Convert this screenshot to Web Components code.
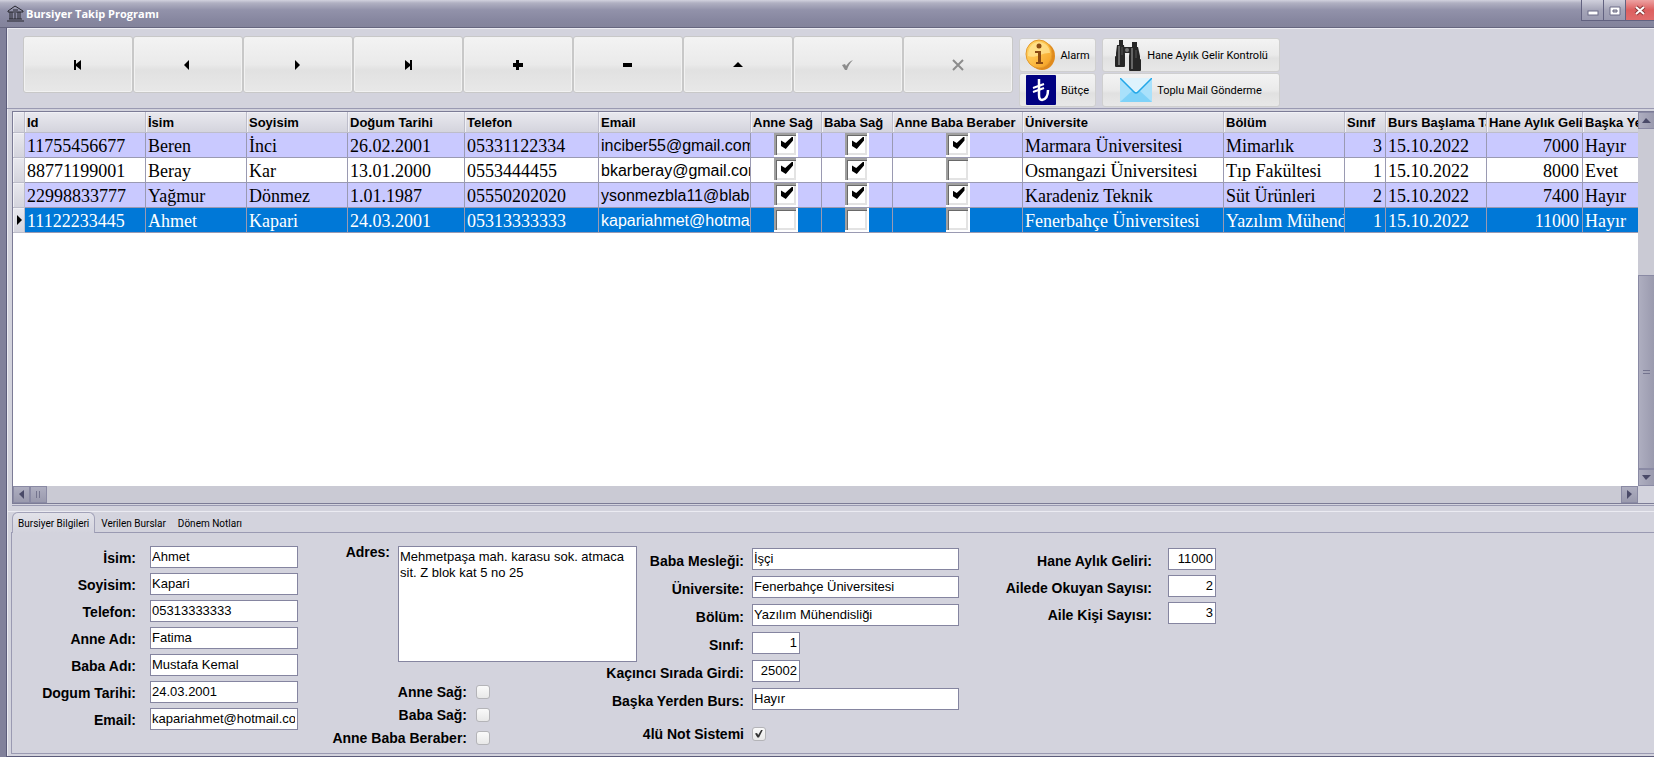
<!DOCTYPE html>
<html lang="tr">
<head>
<meta charset="utf-8">
<title>Bursiyer Takip Programı</title>
<style>
  :root {
    --face: #d3d3dd;
    --line: #9a9ab2;
    --edge: #5c5c7a;
    --light: #ebebf2;
    --stripe: #c9c9ff;
    --select: #0078d7;
    --sans: "Liberation Sans", Arial, sans-serif;
    --narrow: Roboto, "Liberation Sans", sans-serif;
    --serif: "Liberation Serif", "Times New Roman", serif;
  }
  body {
    margin: 0;
    font-family: var(--sans);
    color: #000;
    background: var(--face);
  }
</style>
</head>
<body>
<app-window caption="Bursiyer Takip Programı">
  <tool-bar slot="toolbar">
    <nav-button slot="nav" icon="first" label="İlk kayıt"></nav-button>
    <nav-button slot="nav" icon="prev" label="Önceki kayıt"></nav-button>
    <nav-button slot="nav" icon="next" label="Sonraki kayıt"></nav-button>
    <nav-button slot="nav" icon="last" label="Son kayıt"></nav-button>
    <nav-button slot="nav" icon="plus" label="Ekle"></nav-button>
    <nav-button slot="nav" icon="minus" label="Sil"></nav-button>
    <nav-button slot="nav" icon="up" label="Düzenle"></nav-button>
    <nav-button slot="nav" icon="check" label="Kaydet" disabled></nav-button>
    <nav-button slot="nav" icon="cross" label="İptal" disabled></nav-button>

    <tool-button>
      <svg slot="icon" width="30" height="32" viewBox="0 0 30 32">
        <defs>
          <linearGradient id="gold" x1="0" y1="0" x2="1" y2="1">
            <stop offset="0" stop-color="#ffd76a"/><stop offset=".5" stop-color="#fdc04a"/><stop offset="1" stop-color="#f39a1c"/>
          </linearGradient>
        </defs>
        <ellipse cx="17" cy="17" rx="13" ry="14" fill="#e08a1c"/>
        <ellipse cx="14" cy="15" rx="13" ry="14" fill="url(#gold)" stroke="#e39a2c"/>
        <path d="M3 17C3 8 8 3 14 3s11 5 11 11C18 13 10 20 3 17z" fill="#ffe79a" opacity=".7"/>
        <circle cx="14" cy="7" r="2.5" fill="#8a4a12"/>
        <path d="M10 12h6v11h2v2h-7v-2h2v-9h-3z" fill="#8a4a12"/>
      </svg>
      Alarm
    </tool-button>
    <tool-button>
      <svg slot="icon" width="28" height="32" viewBox="2 0 28 32">
        <g fill="#262626">
          <rect x="7" y="1" width="4" height="6"/><rect x="20" y="3" width="5" height="6"/>
          <path d="M5 6h7l1 9v12H4V14z"/><path d="M18 8h8l2 9v14H17V17z"/>
          <path d="M12 8h6v6h-6z"/><rect x="3" y="17" width="10" height="11" rx="1"/><rect x="17" y="20" width="12" height="12" rx="1"/>
        </g>
        <path d="M7 7v19M20 9v21" stroke="#7c7c7c" stroke-width="1.5"/>
        <path d="M10 8v8M24 11v8" stroke="#555" stroke-width="1"/>
        <circle cx="15" cy="11" r="2" fill="#777"/>
      </svg>
      Hane Aylık Gelir Kontrolü
    </tool-button>
    <tool-button>
      <svg slot="icon" width="30" height="30" viewBox="0 0 30 30">
        <rect width="30" height="30" rx="1" fill="#000080"/>
        <path d="M13 4v16q0 5 3 5 6-1 6-10" fill="none" stroke="#fff" stroke-width="2.5"/>
        <path d="M7 13l11-4M7 17l11-4" stroke="#fff" stroke-width="2"/>
      </svg>
      Bütçe
    </tool-button>
    <tool-button>
      <svg slot="icon" width="32" height="24" viewBox="0 0 32 24">
        <rect width="32" height="24" fill="#a9e1fb"/>
        <path d="M0 24l12-11h8l12 11z" fill="#7fd2f8"/>
        <path d="M0 0h32L16 15z" fill="#def3fd"/>
        <path d="M0 0l14 14q2 2 4 0L32 0" fill="none" stroke="#22a7e8" stroke-width="1.5"/>
      </svg>
      Toplu Mail Gönderme
    </tool-button>
  </tool-bar>

  <record-grid slot="grid"></record-grid>

  <tab-panel slot="details">
    <form-column style="--label: 104px; --gap: 14px; --control: 148px; --row: 5px">
      <form-field label="İsim:" value="Ahmet"></form-field>
      <form-field label="Soyisim:" value="Kapari"></form-field>
      <form-field label="Telefon:" value="05313333333"></form-field>
      <form-field label="Anne Adı:" value="Fatima"></form-field>
      <form-field label="Baba Adı:" value="Mustafa Kemal"></form-field>
      <form-field label="Dogum Tarihi:" value="24.03.2001"></form-field>
      <form-field label="Email:" value="kapariahmet@hotmail.com"></form-field>
    </form-column>

    <form-column style="--label: 70px; --gap: 8px; --control: 239px; --row: 20px">
      <form-field kind="memo" label="Adres:" value="Mehmetpaşa mah. karasu sok. atmaca sit. Z blok kat 5 no 25"></form-field>
      <form-column class="checks" style="--label: 147px; --gap: 9px; --row: 4px">
        <form-field kind="check" label="Anne Sağ:"></form-field>
        <form-field kind="check" label="Baba Sağ:"></form-field>
        <form-field kind="check" label="Anne Baba Beraber:"></form-field>
      </form-column>
    </form-column>

    <form-column class="lower" style="--label: 107px; --gap: 8px; --control: 207px; --row: 6px">
      <form-field label="Baba Mesleği:" value="İşçi"></form-field>
      <form-field label="Üniversite:" value="Fenerbahçe Üniversitesi"></form-field>
      <form-field label="Bölüm:" value="Yazılım Mühendisliği"></form-field>
      <form-field kind="number" label="Sınıf:" value="1"></form-field>
      <form-field kind="number" label="Kaçıncı Sırada Girdi:" value="25002"></form-field>
      <form-field label="Başka Yerden Burs:" value="Hayır"></form-field>
      <form-field class="last" kind="check" label="4lü Not Sistemi" checked></form-field>
    </form-column>

    <form-column class="lower" style="--label: 161px; --gap: 16px; --row: 5px">
      <form-field kind="number" label="Hane Aylık Geliri:" value="11000"></form-field>
      <form-field kind="number" label="Ailede Okuyan Sayısı:" value="2"></form-field>
      <form-field kind="number" label="Aile Kişi Sayısı:" value="3"></form-field>
    </form-column>
  </tab-panel>
</app-window>

<script>
class AppWindow extends HTMLElement {
  constructor() {
    super();
    this.attachShadow({ mode: "open" });
  }

  connectedCallback() {
    this.shadowRoot.innerHTML = `
      <style>
        :host {
          display: flex;
          flex-direction: column;
          min-height: 100vh;
          overflow: hidden;
        }
        header {
          display: flex;
          align-items: flex-start;
          height: 27px;
          padding-left: 7px;
          background: linear-gradient(#d2d2de, #b0b0c2 3px, #9292aa 10px, #8787a0 20px, #83839b);
          border-bottom: 1px solid #66667f;
        }
        header svg { display: block; }
        .logo { margin: 5px 2px 0 0; }
        h1 {
          flex: 1;
          margin: 0;
          color: #fff;
          font: bold 11px/28px "Open Sans", "Noto Sans", sans-serif;
        }
        .controls {
          display: flex;
          border: 1px solid #626280;
          border-width: 0 0 1px 1px;
        }
        .controls button {
          display: grid;
          place-items: center;
          width: 22px;
          height: 20px;
          padding: 0;
          border: 0;
          border-right: 1px solid #626280;
          background: linear-gradient(#d0d0dc, #a5a5b8 50%, #9a9ab0);
        }
        .controls .close {
          width: 28px;
          border-right: 0;
          background: linear-gradient(#eda2a2, #dc5f5f 50%, #e06c6c);
        }
        main {
          flex: 1;
          display: flex;
          flex-direction: column;
          border-left: 1px solid var(--edge);
          border-bottom: 1px solid var(--edge);
          margin-left: 6px;
          box-shadow: -6px 0 0 #81819b, inset 1px 1px 0 var(--light);
        }
        ::slotted([slot="grid"]) { flex: 1; }
      </style>
      <header>
        <svg class="logo" width="17" height="17" viewBox="0 0 17 17" fill="none" stroke="#26262e" aria-hidden="true">
          <path d="M1 6L8 1l8 5v1H1zM3 7v7M5 7v7M8 8v6M11 7v7M13 7v7M2 14h13M0 16h17M6 5h5"/>
        </svg>
        <h1></h1>
        <div class="controls">
          <button aria-label="Küçült"><svg width="12" height="12"><rect x="1" y="7" width="10" height="4" fill="#fff" stroke="#6c6c88"/></svg></button>
          <button aria-label="Ekranı kapla"><svg width="12" height="12"><path d="M1 3h10v8H1z" fill="#fff" stroke="#6c6c88"/><path d="M4 6h4v2H4z" fill="#bbb" stroke="#6c6c88"/></svg></button>
          <button class="close" aria-label="Kapat"><svg width="12" height="12"><path d="M2 3l8 7M10 3l-8 7" stroke="#8c3b3b" stroke-width="4"/><path d="M2 3l8 7M10 3l-8 7" stroke="#fff" stroke-width="2"/></svg></button>
        </div>
      </header>
      <main>
        <slot name="toolbar"></slot>
        <slot name="grid"></slot>
        <slot name="details"></slot>
      </main>
    `;
    this.shadowRoot.querySelector("h1").textContent = this.getAttribute("caption");
  }
}
customElements.define("app-window", AppWindow);

class ToolBar extends HTMLElement {
  constructor() {
    super();
    this.attachShadow({ mode: "open" });
    this.shadowRoot.innerHTML = `
      <style>
        :host {
          display: flex;
          gap: 6px;
          padding: 8px 0 0 16px;
          height: 72px;
          border-bottom: 1px solid var(--line);
        }
        .nav {
          display: flex;
          flex: 0 1 990px;
          height: 57px;
        }
        .tools {
          display: grid;
          grid-template: 34px 34px / 77px 178px;
          gap: 1px 6px;
          padding-top: 2px;
        }
      </style>
      <div class="nav"><slot name="nav"></slot></div>
      <div class="tools"><slot></slot></div>
    `;
  }
}
customElements.define("tool-bar", ToolBar);

const NAV_ICONS = {
  first: '<path d="M4 3h2v4l5-4v10l-5-4v4H4z"/>',
  prev: '<path d="M4 8l5-5v10z"/>',
  next: '<path d="M10 8L5 3v10z"/>',
  last: '<path d="M12 3h-2v4L5 3v10l5-4v4h2z"/>',
  plus: '<path d="M6 3h3v3h4v4H9v3H6v-3H3V6h3z"/>',
  minus: '<path d="M3 6h9v4H3z"/>',
  up: '<path d="M3 10l5-5 5 5z"/>',
  check: '<path d="M2 8l3-1 1 2c2-3 4-5 7-6-3 3-5 6-6 10H5z" fill="#8c8c8c"/>',
  cross: '<path d="M3 3l10 10M13 3L3 13" stroke="#8c8c8c" stroke-width="2"/>',
};

class NavButton extends HTMLElement {
  constructor() {
    super();
    this.attachShadow({ mode: "open" });
  }

  connectedCallback() {
    this.shadowRoot.innerHTML = `
      <style>
        :host { display: flex; flex: 1; }
        button {
          flex: 1;
          display: grid;
          place-items: center;
          padding: 0;
          border: 1px solid #c8c8c8;
          border-radius: 3px;
          background: linear-gradient(#f3f3f3, #eaeaea 50%, #e1e1e1 60%, #e8e8e8);
          box-shadow: inset 0 0 0 1px #f2f2f2;
        }
      </style>
      <button aria-label="${this.getAttribute("label")}" ${this.hasAttribute("disabled") ? "disabled" : ""}>
        <svg width="16" height="16" viewBox="0 0 16 16">${NAV_ICONS[this.getAttribute("icon")]}</svg>
      </button>
    `;
  }
}
customElements.define("nav-button", NavButton);

class ToolButton extends HTMLElement {
  constructor() {
    super();
    this.attachShadow({ mode: "open" });
    this.shadowRoot.innerHTML = `
      <style>
        :host { display: flex; }
        button {
          flex: 1;
          display: flex;
          align-items: center;
          justify-content: center;
          gap: 5px;
          padding: 0;
          border: 1px solid #cfcfcf;
          border-radius: 3px;
          background: linear-gradient(#f3f3f3, #eaeaea 50%, #e1e1e1 60%, #e8e8e8);
          color: #000;
          font: 11px/16px var(--narrow);
          white-space: nowrap;
          overflow: hidden;
        }
        span { padding-top: 2px; }
      </style>
      <button><slot name="icon"></slot><span><slot></slot></span></button>
    `;
  }
}
customElements.define("tool-button", ToolButton);

// orient="vertical" | "horizontal"; before/thumb/after are flex values of the track parts
class ScrollBar extends HTMLElement {
  constructor() {
    super();
    this.attachShadow({ mode: "open" });
  }

  connectedCallback() {
    const vertical = this.getAttribute("orient") === "vertical";
    this.shadowRoot.innerHTML = `
      <style>
        :host {
          display: flex;
          flex-direction: ${vertical ? "column" : "row"};
          background: #cacad4;
          --dir: ${vertical ? "to right" : "to bottom"};
        }
        button, .thumb {
          box-sizing: border-box;
          display: grid;
          place-items: center;
          flex: 0 0 17px;
          padding: 0;
          border: 1px solid #8a8aa4;
          background: linear-gradient(var(--dir), #aeaec0, #9a9aae);
        }
        .thumb { flex: ${this.getAttribute("thumb")}; }
        .before { flex: ${this.getAttribute("before")}; }
        .after { flex: ${this.getAttribute("after")}; }
        svg { display: block; fill: #4a4a68; }
      </style>
      <button aria-label="Geri"><svg width="9" height="9"><path d="${vertical ? "M0 7l4-5 5 5z" : "M2 4l5-4v9z"}"/></svg></button>
      <div class="before"></div>
      <div class="thumb"><svg width="7" height="7"><path fill="#74748e" d="${vertical ? "M0 1h7v1H0zM0 4h7v1H0z" : "M1 0h1v7H1zM4 0h1v7H4z"}"/></svg></div>
      <div class="after"></div>
      <button aria-label="İleri"><svg width="9" height="9"><path d="${vertical ? "M0 2l4 5 5-5z" : "M7 4L2 0v9z"}"/></svg></button>
    `;
  }
}
customElements.define("scroll-bar", ScrollBar);

const COLUMNS = [
  { title: "Id", width: 121 },
  { title: "İsim", width: 101 },
  { title: "Soyisim", width: 101 },
  { title: "Doğum Tarihi", width: 117 },
  { title: "Telefon", width: 134 },
  { title: "Email", width: 152, type: "email" },
  { title: "Anne Sağ", width: 71, type: "bool" },
  { title: "Baba Sağ", width: 71, type: "bool" },
  { title: "Anne Baba Beraber", width: 130, type: "bool" },
  { title: "Üniversite", width: 201 },
  { title: "Bölüm", width: 121 },
  { title: "Sınıf", width: 41, type: "num" },
  { title: "Burs Başlama Tarihi", width: 101 },
  { title: "Hane Aylık Geliri", width: 96, type: "num" },
  { title: "Başka Yerden Burs" },
];

const ROWS = [
  ["11755456677", "Beren", "İnci", "26.02.2001", "05331122334", "inciber55@gmail.com", true, true, true, "Marmara Üniversitesi", "Mimarlık", "3", "15.10.2022", "7000", "Hayır"],
  ["88771199001", "Beray", "Kar", "13.01.2000", "0553444455", "bkarberay@gmail.com", true, true, false, "Osmangazi Üniversitesi", "Tıp Fakültesi", "1", "15.10.2022", "8000", "Evet"],
  ["22998833777", "Yağmur", "Dönmez", "1.01.1987", "05550202020", "ysonmezbla11@blabla.com", true, true, true, "Karadeniz Teknik", "Süt Ürünleri", "2", "15.10.2022", "7400", "Hayır"],
  ["11122233445", "Ahmet", "Kapari", "24.03.2001", "05313333333", "kapariahmet@hotmail.com", false, false, false, "Fenerbahçe Üniversitesi", "Yazılım Mühendisliği", "1", "15.10.2022", "11000", "Hayır"],
];

class RecordGrid extends HTMLElement {
  constructor() {
    super();
    this.attachShadow({ mode: "open" });
  }

  connectedCallback() {
    this.render();
  }

  cell(value, col) {
    if (col.type === "bool") {
      return `<td class="bool"><input type="checkbox" aria-label="${col.title}" ${value ? "checked" : ""}></td>`;
    }
    return `<td class="${col.type || ""}">${value}</td>`;
  }

  render() {
    const selected = ROWS.length - 1;
    const cols = COLUMNS.map((c) => `<col${c.width ? ` style="width:${c.width}px"` : ""}>`).join("");
    const head = COLUMNS.map((c) => `<th scope="col">${c.title}</th>`).join("");
    const body = ROWS.map((row, i) => `
      <tr class="${i === selected ? "selected" : ""}">
        <th scope="row">${i === selected ? '<svg width="5" height="10"><path d="M0 0l5 5-5 5z"/></svg>' : ""}</th>
        ${row.map((v, j) => this.cell(v, COLUMNS[j])).join("")}
      </tr>`).join("");

    this.shadowRoot.innerHTML = `
      <style>
        :host {
          display: flex;
          flex-direction: column;
          margin: 2px 0 0 5px;
          border-top: 1px solid #7c7c96;
          border-bottom: 1px solid var(--line);
          padding-bottom: 1px;
        }
        .body {
          flex: 1;
          display: grid;
          grid-template: 1fr 17px / minmax(0, 1fr) 16px;
          min-height: 240px;
          border-left: 1px solid #7c7c96;
          border-bottom: 1px solid #7c7c96;
        }
        .sheet { background: #fff; overflow: hidden; }
        scroll-bar[orient="vertical"] { width: 17px; }
        table {
          width: 100%;
          table-layout: fixed;
          border-collapse: separate;
          border-spacing: 0;
        }
        th, td {
          box-sizing: border-box;
          padding: 0 2px;
          overflow: hidden;
          white-space: nowrap;
          text-align: left;
          border-right: 1px solid var(--line);
          border-bottom: 1px solid var(--line);
        }
        td {
          height: 25px;
          padding: 2px 3px 0 2px;
          font: 18px/22px var(--serif);
        }
        th {
          height: 21px;
          padding-top: 2px;
          font: bold 13px/18px var(--sans);
          background: linear-gradient(#e9e9ef, #d4d4dd);
          border-color: #bdbdca;
          box-shadow: inset 1px 1px 0 #f1f1f6;
        }
        tbody th { padding: 0 0 0 4px; }
        svg { display: block; }
        .num { text-align: right; }
        .email { font: 16px/22px var(--sans); }
        .bool { padding: 0; text-align: center; }
        tbody tr:nth-child(odd) { background: var(--stripe); }
        tbody tr.selected { background: var(--select); color: #fff; }
        th:last-child, td:last-child { border-right: 0; }
        input {
          appearance: none;
          display: block;
          box-sizing: border-box;
          width: 24px;
          height: 24px;
          margin: 0 auto;
          padding: 3px;
          border: solid #fff;
          border-width: 0 2px 2px 0;
          background: #fff;
          box-shadow: inset 2px 2px 0 #a0a0a0, inset 3px 3px 0 #696969, inset -2px -2px 0 #e3e3e3;
        }
        input:checked::before {
          content: "";
          display: block;
          width: 12px;
          height: 12px;
          margin: 1px 0 0 4px;
          background: #000;
          clip-path: polygon(0 30%, 35% 50%, 90% 0, 100% 0, 100% 30%, 40% 100%, 0 75%);
        }
      </style>
      <div class="body">
        <div class="sheet">
          <table>
            <colgroup><col style="width:12px">${cols}</colgroup>
            <thead><tr><th aria-label="Kayıt"></th>${head}</tr></thead>
            <tbody>${body}</tbody>
          </table>
        </div>
        <scroll-bar orient="vertical" before="147" thumb="193" after="0"></scroll-bar>
        <scroll-bar orient="horizontal" before="0" thumb="0 0 17px" after="1"></scroll-bar>
      </div>
    `;
  }
}
customElements.define("record-grid", RecordGrid);

class TabPanel extends HTMLElement {
  constructor() {
    super();
    this.attachShadow({ mode: "open" });
    this.shadowRoot.innerHTML = `
      <style>
        :host {
          display: block;
          margin-top: 5px;
          padding: 0 0 2px 4px;
          border-top: 1px solid var(--light);
        }
        .tabs {
          display: flex;
          height: 20px;
          padding-left: 1px;
        }
        button {
          padding: 3px 6px 0;
          border: 0;
          background: none;
          color: #000;
          font: 10px/17px var(--narrow);
        }
        button[aria-selected="true"] {
          height: 21px;
          padding: 0 5px;
          border: 1px solid #a2a2b8;
          border-bottom: 0;
          border-radius: 6px 6px 0 0;
          background: linear-gradient(#e2e2e9, var(--face));
        }
        .page {
          display: flex;
          align-items: flex-start;
          min-height: 207px;
          padding: 13px 0 0 20px;
          border: 1px solid var(--line);
          border-right: 0;
        }
      </style>
      <div class="tabs" role="tablist">
        <button role="tab" aria-selected="true">Bursiyer Bilgileri</button>
        <button role="tab">Verilen Burslar</button>
        <button role="tab">Dönem Notları</button>
      </div>
      <div class="page"><slot></slot></div>
    `;
  }
}
customElements.define("tab-panel", TabPanel);

class FormColumn extends HTMLElement {
  constructor() {
    super();
    this.attachShadow({ mode: "open" });
    this.shadowRoot.innerHTML = `
      <style>
        :host {
          display: flex;
          flex-direction: column;
          gap: var(--row);
        }
        :host(:nth-child(2)) { margin-left: 22px; }
        :host(:nth-child(4)) { margin-left: 32px; }
        :host(.lower) {
          padding-top: 2px;
          --drop: 4px;
        }
        :host(.checks) { margin-left: 0; }
        ::slotted(.last) { margin-top: 8px; }
      </style>
      <slot></slot>
    `;
  }
}
customElements.define("form-column", FormColumn);

class FormField extends HTMLElement {
  constructor() {
    super();
    this.attachShadow({ mode: "open" });
  }

  connectedCallback() {
    this.render();
  }

  control() {
    const value = this.getAttribute("value") || "";
    switch (this.getAttribute("kind")) {
      case "memo":
        return `<textarea id="control">${value}</textarea>`;
      case "check":
        return `<input id="control" type="checkbox" ${this.hasAttribute("checked") ? "checked" : ""}>`;
      case "number":
        return `<input id="control" class="number" type="text" inputmode="numeric" value="${value}">`;
      default:
        return `<input id="control" type="text" value="${value}">`;
    }
  }

  render() {
    this.shadowRoot.innerHTML = `
      <style>
        :host {
          display: flex;
          align-items: center;
          height: 22px;
          gap: var(--gap);
        }
        :host([kind="memo"]) {
          align-items: flex-start;
          height: auto;
        }
        :host([kind="check"]) { height: 19px; }
        /* long captions run out to the left of their column */
        label {
          display: flex;
          flex: none;
          justify-content: flex-end;
          width: var(--label);
          font: bold 14px/18px var(--sans);
          white-space: nowrap;
          padding-top: var(--drop, 2px);
        }
        :host([kind="memo"]) label {
          padding: 0;
          line-height: 12px;
        }
        :host([kind="check"]) label { padding: 0; }
        input, textarea {
          box-sizing: border-box;
          width: var(--control);
          height: 22px;
          margin: 0;
          padding: 0 2px 1px 1px;
          border: 1px solid #8585a0;
          border-radius: 0;
          background: #fff;
          color: #000;
          font: 13px/16px var(--sans);
        }
        textarea {
          display: block;
          height: 116px;
          padding-top: 2px;
          resize: none;
        }
        .number {
          width: 48px;
          text-align: right;
        }
        input[type="checkbox"] {
          appearance: none;
          width: 14px;
          height: 14px;
          padding: 0;
          border-color: #b4b4b8;
          border-radius: 3px;
          background: linear-gradient(#fafafa, #e8e8e8);
        }
        input[type="checkbox"]:checked::before {
          content: "";
          display: block;
          width: 8px;
          height: 8px;
          margin: 2px;
          background: #333;
          clip-path: polygon(0 50%, 25% 45%, 40% 70%, 80% 0, 100% 0, 50% 100%, 30% 100%);
        }
      </style>
      <label for="control">${this.getAttribute("label")}</label>
      ${this.control()}
    `;
  }
}
customElements.define("form-field", FormField);
</script>
</body>
</html>
